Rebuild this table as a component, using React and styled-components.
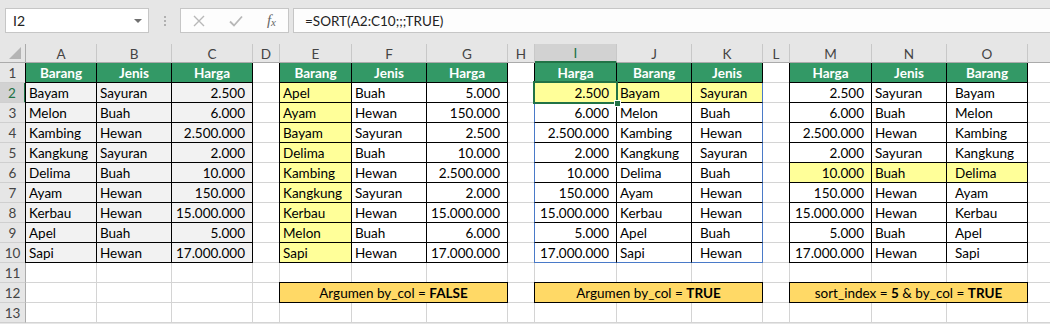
import React from "react";
import styled, { createGlobalStyle, css } from "styled-components";

// warna-warna dasar lembar kerja
const GRID = "#d4d4d4";
const INK = "#000";
const SPILL = "#4a7ac8";
const GREEN = "#339966";
const SEL = "#217346";
const YELLOW = "#ffff99";
const ORANGE = "#ffd966";

// kolom P hanya terlihat sebagian, hurufnya jatuh di luar layar
const COLS = [
  ["A", 71], ["B", 75], ["C", 81], ["D", 27], ["E", 72], ["F", 75], ["G", 81], ["H", 27],
  ["I", 82], ["J", 75], ["K", 71], ["L", 27], ["M", 82], ["N", 75], ["O", 81], ["", 64],
];

const GlobalStyle = createGlobalStyle`
  html, body { margin: 0; padding: 0; background: #e6e6e6; }
  body { font-family: Lato, "Liberation Sans", sans-serif; }
`;

const Window = styled.div`
  width: 1050px;
  height: 324px;
  overflow: hidden;
  background: #e6e6e6;
  display: flex;
  flex-direction: column;
`;

// bar rumus
const FormulaBar = styled.div`
  height: 44px;
  flex: none;
  box-sizing: border-box;
  display: flex;
  align-items: flex-start;
  padding: 8px 0 0 5px;
`;
const NameBox = styled.div`
  width: 144px;
  height: 25px;
  box-sizing: border-box;
  border: 1px solid #c6c6c6;
  background: #fff;
  display: flex;
  align-items: center;
  justify-content: space-between;
  padding: 0 6px 0 7px;
  font-size: 14px;
  color: #222;
`;
const Caret = styled.span`
  width: 0;
  height: 0;
  border-left: 4px solid transparent;
  border-right: 4px solid transparent;
  border-top: 4px solid #707070;
`;
const Dots = styled.div`
  width: 31px;
  height: 25px;
  display: flex;
  flex-direction: column;
  align-items: center;
  justify-content: center;
  gap: 2px;
  span { width: 2px; height: 2px; background: #b0b0b0; }
`;
const FxBox = styled.div`
  width: 109px;
  height: 25px;
  box-sizing: border-box;
  border: 1px solid #c6c6c6;
  background: #fdfdfd;
  display: flex;
  align-items: center;
  justify-content: space-around;
`;
const Fx = styled.span`
  font-family: "Liberation Serif", serif;
  font-style: italic;
  color: #666;
  font-size: 15px;
  sub { font-size: 11px; vertical-align: -1px; }
`;
const FormulaInput = styled.div`
  flex: 1;
  margin-left: 4px;
  height: 25px;
  box-sizing: border-box;
  border: 1px solid #c6c6c6;
  border-right: none;
  background: #fdfdfd;
  display: flex;
  align-items: center;
  padding-left: 11px;
  font-size: 13.5px;
  color: #222;
`;

// lembar kerja
const Sheet = styled.div`
  display: grid;
  grid-template-columns: 26px ${COLS.map(c => c[1] + "px").join(" ")};
  grid-template-rows: 19px repeat(13, 20px);
  background: #fff;
  font-size: 13.5px;
`;
const Corner = styled.div`
  box-sizing: border-box;
  background: #e6e6e6;
  border-right: 1px solid #ababab;
  border-bottom: 1px solid #ababab;
  display: flex;
  align-items: flex-end;
  justify-content: flex-end;
  padding: 0 4px 3px 0;
  &::before {
    content: "";
    border-bottom: 12px solid #b4b4b4;
    border-left: 12px solid transparent;
  }
`;
const ColHead = styled.div`
  box-sizing: border-box;
  background: ${p => (p.$sel ? "#d2d2d2" : "#e6e6e6")};
  border-right: 1px solid #c8c8c8;
  border-bottom: ${p => (p.$sel ? `2px solid ${SEL}` : "1px solid #ababab")};
  color: ${p => (p.$sel ? SEL : "#444")};
  display: flex;
  align-items: center;
  justify-content: center;
  padding-top: 1px;
`;
const RowHead = styled.div`
  box-sizing: border-box;
  background: ${p => (p.$sel ? "#d2d2d2" : "#e6e6e6")};
  border-right: ${p => (p.$sel ? `2px solid ${SEL}` : "1px solid #ababab")};
  border-bottom: 1px solid #cfcfcf;
  color: ${p => (p.$sel ? SEL : "#444")};
  display: flex;
  align-items: center;
  justify-content: center;
  padding-top: 1px;
`;
const Cell = styled.div`
  box-sizing: border-box;
  min-width: 0;
  overflow: hidden;
  white-space: nowrap;
  background: ${p => p.$fill || "#fff"};
  border-right: 1px solid ${p => p.$r || GRID};
  border-bottom: 1px solid ${p => p.$b || GRID};
  ${p => p.$l && css`margin-left: -1px; border-left: 1px solid ${p.$l};`}
  ${p => p.$t && css`margin-top: -1px; border-top: 1px solid ${p.$t};`}
  color: ${p => (p.$head ? "#fff" : "#000")};
  font-weight: ${p => (p.$head ? 700 : 400)};
  text-align: ${p => p.$align || "left"};
  padding: 1px ${p => (p.$align === "right" ? "7px" : "3px")} 0 ${p => (p.$indent ? "8px" : "3px")};
  line-height: 18px;
  ${p => p.$sel && css`
    position: relative;
    overflow: visible;
    z-index: 2;
    &::after {
      content: "";
      position: absolute;
      top: -2px; left: -2px; right: -2px; bottom: -2px;
      border: 2px solid ${SEL};
    }
    &::before {
      content: "";
      position: absolute;
      right: -5px; bottom: -5px;
      width: 5px; height: 5px;
      background: ${SEL};
      border: 1px solid #fff;
      z-index: 3;
    }
  `}
`;
const Label = styled(Cell)`
  grid-column: span 3;
  text-align: center;
  b { font-weight: 700; }
`;

const base = [
  ["Bayam", "Sayuran", "2.500"],
  ["Melon", "Buah", "6.000"],
  ["Kambing", "Hewan", "2.500.000"],
  ["Kangkung", "Sayuran", "2.000"],
  ["Delima", "Buah", "10.000"],
  ["Ayam", "Hewan", "150.000"],
  ["Kerbau", "Hewan", "15.000.000"],
  ["Apel", "Buah", "5.000"],
  ["Sapi", "Hewan", "17.000.000"],
];
const sorted = [...base].sort((a, b) => a[0].localeCompare(b[0]));

const TABLES = [
  { start: 0, head: ["Barang", "Jenis", "Harga"], rows: base, num: 2, fill: () => "#f2f2f2" },
  { start: 4, head: ["Barang", "Jenis", "Harga"], rows: sorted, num: 2, fill: (r, j) => (j === 0 ? YELLOW : null) },
  { start: 8, head: ["Harga", "Barang", "Jenis"], rows: base.map(([b, j, h]) => [h, b, j]), num: 0, indent: 2, spill: true, fill: r => (r === 2 ? YELLOW : null) },
  { start: 12, head: ["Harga", "Jenis", "Barang"], rows: base.map(([b, j, h]) => [h, j, b]), num: 0, indent: 2, fill: r => (r === 6 ? YELLOW : null) },
];

const LABELS = [
  { start: 4, body: <>Argumen by_col = <b>FALSE</b></> },
  { start: 8, body: <>Argumen by_col = <b>TRUE</b></> },
  { start: 12, body: <>sort_index = <b>5</b> &amp; by_col = <b>TRUE</b></> },
];

const tableCell = (t, c, r) => {
  const j = c - t.start;
  const p = { $r: INK, $b: INK };
  if (j === 0) p.$l = INK;
  if (r === 1) {
    return <Cell key={c} {...p} $fill={GREEN} $head $align="center">{t.head[j]}</Cell>;
  }
  if (t.spill) {
    if (j === 0) p.$l = SPILL;
    if (j === 2) p.$r = SPILL;
    if (r === 10) p.$b = SPILL;
  }
  return (
    <Cell
      key={c}
      {...p}
      $fill={t.fill(r, j)}
      $align={j === t.num ? "right" : "left"}
      $indent={j === t.indent}
      $sel={c === 8 && r === 2}
    >
      {t.rows[r - 2][j]}
    </Cell>
  );
};

const renderRow = r => {
  const out = [<RowHead key="h" $sel={r === 2}>{r}</RowHead>];
  for (let c = 0; c < COLS.length; c++) {
    if (r === 12) {
      const lab = LABELS.find(l => l.start === c);
      if (lab) {
        out.push(<Label key={c} $fill={ORANGE} $l={INK} $t={INK} $r={INK} $b={INK}>{lab.body}</Label>);
        c += 2;
        continue;
      }
    }
    const t = r <= 10 && TABLES.find(tb => c >= tb.start && c < tb.start + 3);
    out.push(t ? tableCell(t, c, r) : <Cell key={c} />);
  }
  return <React.Fragment key={r}>{out}</React.Fragment>;
};

const App = () => {
  return (
    <Window>
      <GlobalStyle />
      <FormulaBar>
        <NameBox>
          I2
          <Caret />
        </NameBox>
        <Dots><span /><span /><span /></Dots>
        <FxBox>
          <svg width="12" height="12" viewBox="0 0 12 12">
            <path d="M1 1 L11 11 M11 1 L1 11" stroke="#b8b8b8" strokeWidth="1.4" fill="none" />
          </svg>
          <svg width="14" height="12" viewBox="0 0 14 12">
            <path d="M1 6.5 L5 10.5 L13 1.5" stroke="#b8b8b8" strokeWidth="1.8" fill="none" />
          </svg>
          <Fx>f<sub>x</sub></Fx>
        </FxBox>
        <FormulaInput>=SORT(A2:C10;;;TRUE)</FormulaInput>
      </FormulaBar>
      <Sheet>
        <Corner />
        {COLS.map(([name], i) => (
          <ColHead key={i} $sel={name === "I"}>{name}</ColHead>
        ))}
        {Array.from({ length: 13 }, (_, i) => renderRow(i + 1))}
      </Sheet>
    </Window>
  );
};

export default App;
